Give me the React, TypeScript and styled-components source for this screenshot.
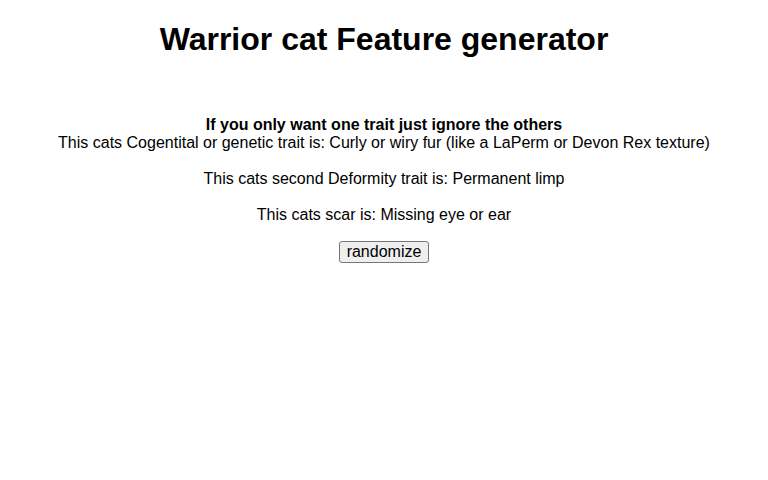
import React, { useState } from "react";
import styled, { createGlobalStyle } from "styled-components";

const GlobalStyle = createGlobalStyle`
  body {
    margin: 0;
    background: #ffffff;
    color: #000000;
    font-family: "Liberation Sans", Arial, sans-serif;
    font-size: 16px;
    line-height: 18px;
  }
`;

const Page = styled.div`
  padding: 0 8px;
  text-align: center;
`;

const Title = styled.h1`
  font-size: 32px;
  line-height: 37px;
  font-weight: 700;
  margin: 21.44px 0;
`;

const Traits = styled.div`
  padding-top: 36px;
  display: flex;
  flex-direction: column;
  align-items: center;
`;

const Note = styled.div`
  font-weight: 700;
`;

const Trait = styled.div<{ $gap?: number }>`
  margin-bottom: ${(p) => p.$gap ?? 0}px;
`;

const RandomButton = styled.button`
  font-family: "Liberation Sans", Arial, sans-serif;
  font-size: 16px;
  line-height: 18px;
  padding: 1px 7px;
  color: #000000;
  background: #efefef;
  border: 1px solid #767676;
  border-radius: 3px;
  cursor: pointer;
  &:hover {
    background: #e5e5e5;
  }
`;

const genetic = [
  "Curly or wiry fur (like a LaPerm or Devon Rex texture)",
  "Extra toes (polydactyl)",
  "Heterochromia (two different coloured eyes)",
  "Bobbed or short tail",
];
const deformity = ["Permanent limp", "Crooked jaw", "Kinked tail", "Folded ears"];
const scars = ["Missing eye or ear", "Torn ear", "Scar across the nose", "Missing tail tip"];

const pick = (list: string[]) => list[Math.floor(Math.random() * list.length)];

function App() {
  const [traits, setTraits] = useState({
    genetic: genetic[0],
    deformity: deformity[0],
    scar: scars[0],
  });

  const randomize = () =>
    setTraits({ genetic: pick(genetic), deformity: pick(deformity), scar: pick(scars) });

  return (
    <Page>
      <GlobalStyle />
      <Title>Warrior cat Feature generator</Title>
      <Traits>
        <Note>If you only want one trait just ignore the others</Note>
        <Trait $gap={18}>This cats Cogentital or genetic trait is: {traits.genetic}</Trait>
        <Trait $gap={18}>This cats second Deformity trait is: {traits.deformity}</Trait>
        <Trait $gap={17}>This cats scar is: {traits.scar}</Trait>
        <RandomButton onClick={randomize}>randomize</RandomButton>
      </Traits>
    </Page>
  );
}

export default App;
